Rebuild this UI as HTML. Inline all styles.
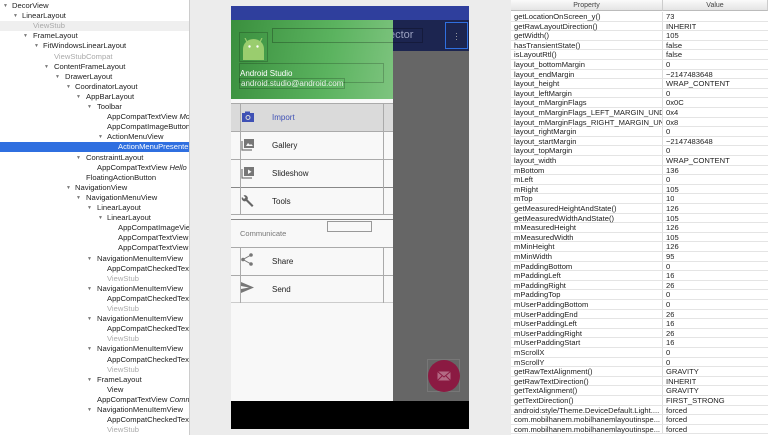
<!DOCTYPE html>
<html><head><meta charset="utf-8"><style>
*{margin:0;padding:0;box-sizing:border-box}
body{width:768px;height:435px;overflow:hidden;background:#ececec;font-family:"Liberation Sans",sans-serif;position:relative}
.tree{position:absolute;left:0;top:0;width:190px;height:435px;background:#fff;overflow:hidden;border-right:1px solid #ccc}
.tr{position:absolute;left:0;width:190px;height:10.1px;font-size:7.6px;line-height:10.1px;color:#222;white-space:nowrap}
.tr.g{color:#aaa}
.tr.sel{background:#2f6fe0;color:#fff}
.tr.stub{background:#efefef}
.ar{position:absolute;font-size:5px;color:#777}
.tbl{position:absolute;left:511px;top:0;width:257px;height:435px;background:#fff}
.th{position:absolute;top:0;height:11px;font-size:7px;line-height:11px;text-align:center;color:#444;background:linear-gradient(#fafafa,#e4e4e4);border-bottom:1px solid #bbb;border-right:1px solid #ccc}
.row{position:absolute;left:0;width:257px;height:9.6px;font-size:7.6px;line-height:9.6px;color:#222;border-bottom:1px solid #e4e4e4;white-space:nowrap}
.row span{position:absolute;overflow:hidden}
.p{left:3px;width:148px}.v{left:155px}
.row:after{content:"";position:absolute;left:151px;top:0;bottom:0;border-left:1px solid #ddd}
.ph{position:absolute;left:231px;top:6px;width:238px;height:423px;background:#666}
</style></head><body>
<div class="tree">
<div class="tr" style="top:1px"><span class="ar" style="left:3px">▼</span><span style="position:absolute;left:12px">DecorView</span></div>
<div class="tr" style="top:11.1px"><span class="ar" style="left:13px">▼</span><span style="position:absolute;left:22px">LinearLayout</span></div>
<div class="tr g stub" style="top:21.2px"><span style="position:absolute;left:33px">ViewStub</span></div>
<div class="tr" style="top:31.3px"><span class="ar" style="left:23px">▼</span><span style="position:absolute;left:33px">FrameLayout</span></div>
<div class="tr" style="top:41.4px"><span class="ar" style="left:34px">▼</span><span style="position:absolute;left:43px">FitWindowsLinearLayout</span></div>
<div class="tr g" style="top:51.5px"><span style="position:absolute;left:54px">ViewStubCompat</span></div>
<div class="tr" style="top:61.6px"><span class="ar" style="left:44px">▼</span><span style="position:absolute;left:54px">ContentFrameLayout</span></div>
<div class="tr" style="top:71.7px"><span class="ar" style="left:55px">▼</span><span style="position:absolute;left:65px">DrawerLayout</span></div>
<div class="tr" style="top:81.8px"><span class="ar" style="left:66px">▼</span><span style="position:absolute;left:75px">CoordinatorLayout</span></div>
<div class="tr" style="top:91.9px"><span class="ar" style="left:76px">▼</span><span style="position:absolute;left:86px">AppBarLayout</span></div>
<div class="tr" style="top:102px"><span class="ar" style="left:87px">▼</span><span style="position:absolute;left:97px">Toolbar</span></div>
<div class="tr" style="top:112.1px"><span style="position:absolute;left:107px">AppCompatTextView <i>Mo</i></span></div>
<div class="tr" style="top:122.2px"><span style="position:absolute;left:107px">AppCompatImageButton</span></div>
<div class="tr" style="top:132.3px"><span class="ar" style="left:98px">▼</span><span style="position:absolute;left:107px">ActionMenuView</span></div>
<div class="tr sel" style="top:142.4px"><span style="position:absolute;left:118px">ActionMenuPresenter</span></div>
<div class="tr" style="top:152.5px"><span class="ar" style="left:76px">▼</span><span style="position:absolute;left:86px">ConstraintLayout</span></div>
<div class="tr" style="top:162.6px"><span style="position:absolute;left:97px">AppCompatTextView <i>Hello</i></span></div>
<div class="tr" style="top:172.7px"><span style="position:absolute;left:86px">FloatingActionButton</span></div>
<div class="tr" style="top:182.8px"><span class="ar" style="left:66px">▼</span><span style="position:absolute;left:75px">NavigationView</span></div>
<div class="tr" style="top:192.9px"><span class="ar" style="left:76px">▼</span><span style="position:absolute;left:86px">NavigationMenuView</span></div>
<div class="tr" style="top:203px"><span class="ar" style="left:87px">▼</span><span style="position:absolute;left:97px">LinearLayout</span></div>
<div class="tr" style="top:213.1px"><span class="ar" style="left:98px">▼</span><span style="position:absolute;left:107px">LinearLayout</span></div>
<div class="tr" style="top:223.2px"><span style="position:absolute;left:118px">AppCompatImageView</span></div>
<div class="tr" style="top:233.3px"><span style="position:absolute;left:118px">AppCompatTextView</span></div>
<div class="tr" style="top:243.4px"><span style="position:absolute;left:118px">AppCompatTextView</span></div>
<div class="tr" style="top:253.5px"><span class="ar" style="left:87px">▼</span><span style="position:absolute;left:97px">NavigationMenuItemView</span></div>
<div class="tr" style="top:263.6px"><span style="position:absolute;left:107px">AppCompatCheckedTextView</span></div>
<div class="tr g" style="top:273.7px"><span style="position:absolute;left:107px">ViewStub</span></div>
<div class="tr" style="top:283.8px"><span class="ar" style="left:87px">▼</span><span style="position:absolute;left:97px">NavigationMenuItemView</span></div>
<div class="tr" style="top:293.9px"><span style="position:absolute;left:107px">AppCompatCheckedTextView</span></div>
<div class="tr g" style="top:304px"><span style="position:absolute;left:107px">ViewStub</span></div>
<div class="tr" style="top:314.1px"><span class="ar" style="left:87px">▼</span><span style="position:absolute;left:97px">NavigationMenuItemView</span></div>
<div class="tr" style="top:324.2px"><span style="position:absolute;left:107px">AppCompatCheckedTextView</span></div>
<div class="tr g" style="top:334.3px"><span style="position:absolute;left:107px">ViewStub</span></div>
<div class="tr" style="top:344.4px"><span class="ar" style="left:87px">▼</span><span style="position:absolute;left:97px">NavigationMenuItemView</span></div>
<div class="tr" style="top:354.5px"><span style="position:absolute;left:107px">AppCompatCheckedTextView</span></div>
<div class="tr g" style="top:364.6px"><span style="position:absolute;left:107px">ViewStub</span></div>
<div class="tr" style="top:374.7px"><span class="ar" style="left:87px">▼</span><span style="position:absolute;left:97px">FrameLayout</span></div>
<div class="tr" style="top:384.8px"><span style="position:absolute;left:107px">View</span></div>
<div class="tr" style="top:394.9px"><span style="position:absolute;left:97px">AppCompatTextView <i>Communicate</i></span></div>
<div class="tr" style="top:405px"><span class="ar" style="left:87px">▼</span><span style="position:absolute;left:97px">NavigationMenuItemView</span></div>
<div class="tr" style="top:415.1px"><span style="position:absolute;left:107px">AppCompatCheckedTextView</span></div>
<div class="tr g" style="top:425.2px"><span style="position:absolute;left:107px">ViewStub</span></div>
</div>

<div class="ph">
 <div style="position:absolute;left:0;top:0;width:238px;height:14px;background:#2f3f9d"></div>
 <div style="position:absolute;left:162px;top:14px;width:76px;height:31px;background:#1c2550;color:#9aa0c0;font-size:11px;line-height:31px"><span style="position:absolute;left:-4px">ector</span>
  <div style="position:absolute;left:52px;top:2px;width:23px;height:27px;border:1px solid #2f6fe0"></div>
  <div style="position:absolute;left:62px;top:12px;color:#aaa;font-size:9px;line-height:3px">·<br>·<br>·</div>
 </div>
 <div style="position:absolute;left:0;top:14px;width:162px;height:79px;background:linear-gradient(100deg,#3a8f3e,#5bb35f 60%,#7ec47f)"></div>
 <div style="position:absolute;left:8px;top:26px;width:29px;height:30px;border:1px solid rgba(0,0,0,.2)"></div>
 <svg style="position:absolute;left:11px;top:32px" width="23" height="22" viewBox="0 0 23 22"><path d="M1 11 A10.5 10 0 0 1 22 11 L22 22 L1 22Z" fill="#9acd6e"/><line x1="5" y1="4" x2="3" y2="0" stroke="#9acd6e" stroke-width="1.2"/><line x1="18" y1="4" x2="20" y2="0" stroke="#9acd6e" stroke-width="1.2"/><circle cx="7.5" cy="8.5" r="1.2" fill="#fff"/><circle cx="15.5" cy="8.5" r="1.2" fill="#fff"/></svg>
 <div style="position:absolute;left:41px;top:22px;width:151px;height:15px;border:1px solid rgba(0,0,0,.25)"></div>
 <div style="position:absolute;left:8px;top:57px;width:145px;height:20px;border:1px solid rgba(0,0,0,.2)"></div>
 <div style="position:absolute;left:9px;top:63px;color:#fff;font-size:8px">Android Studio</div>
 <div style="position:absolute;left:8px;top:72px;width:106px;height:11px;border:1px solid rgba(0,0,0,.2);color:#e8f3e8;font-size:8px;line-height:9px;padding-left:1px">android.studio@android.com</div>
 <div style="position:absolute;left:0;top:93px;width:162px;height:307px;background:#f8f8f8"></div>
 <div style="position:absolute;left:0;top:97px;width:162px;height:28px;background:#dadada;border-top:1px solid #aaa"></div>
 <div style="position:absolute;left:0;top:125px;width:162px;height:1px;background:#aaa"></div>
 <div style="position:absolute;left:0;top:153px;width:162px;height:1px;background:#aaa"></div>
 <div style="position:absolute;left:0;top:181px;width:162px;height:1px;background:#888"></div>
 <div style="position:absolute;left:0;top:208px;width:162px;height:1px;background:#aaa"></div>
 <div style="position:absolute;left:0;top:213px;width:162px;height:1px;background:#888"></div>
 <div style="position:absolute;left:0;top:241px;width:162px;height:1px;background:#aaa"></div>
 <div style="position:absolute;left:0;top:269px;width:162px;height:1px;background:#aaa"></div>
 <div style="position:absolute;left:0;top:296px;width:162px;height:1px;background:#ccc"></div>
 <div style="position:absolute;left:9px;top:97px;width:1px;height:112px;background:#aaa"></div>
 <div style="position:absolute;left:152px;top:97px;width:1px;height:112px;background:#aaa"></div>
 <div style="position:absolute;left:9px;top:241px;width:1px;height:56px;background:#aaa"></div>
 <div style="position:absolute;left:152px;top:241px;width:1px;height:56px;background:#aaa"></div>
 <div style="position:absolute;left:96px;top:215px;width:45px;height:11px;border:1px solid #999"></div>
 <svg style="position:absolute;left:10px;top:105px" width="14" height="12"><rect x="1" y="2" width="12" height="9" fill="#3f51b5"/><rect x="4" y="0.5" width="5" height="2" fill="#3f51b5"/><circle cx="7" cy="6.5" r="2" fill="none" stroke="#dadada" stroke-width="1"/></svg>
 <svg style="position:absolute;left:10px;top:133px" width="14" height="12"><rect x="3" y="0" width="10" height="9" fill="#777"/><path d="M1 2V11H11" stroke="#777" fill="none" stroke-width="1.2"/><path d="M5 7l2-3 2 2 1-1 2 2z" fill="#f8f8f8"/></svg>
 <svg style="position:absolute;left:10px;top:161px" width="14" height="12"><rect x="3" y="0" width="10" height="9" fill="#777"/><path d="M1 2V11H11" stroke="#777" fill="none" stroke-width="1.2"/><path d="M7 2.5v4.5l3.5-2.2z" fill="#f8f8f8"/></svg>
 <svg style="position:absolute;left:9px;top:188px" width="14" height="14"><path d="M2 3a3 3 0 0 0 4 4l6 6 1.5-1.5-6-6a3 3 0 0 0-4-4l2 2-1.5 1.5z" fill="#666"/></svg>
 <svg style="position:absolute;left:10px;top:247px" width="12" height="13"><circle cx="10" cy="2" r="1.8" fill="#777"/><circle cx="2" cy="6.5" r="1.8" fill="#777"/><circle cx="10" cy="11" r="1.8" fill="#777"/><path d="M10 2L2 6.5L10 11" stroke="#777" fill="none"/></svg>
 <svg style="position:absolute;left:10px;top:276px" width="13" height="11"><path d="M0 0L13 5.5L0 11L0 7L8 5.5L0 4z" fill="#777"/></svg>
 <div style="position:absolute;left:41px;top:107px;font-size:8px;color:#3f51b5">Import</div>
 <div style="position:absolute;left:41px;top:135px;font-size:8px;color:#222">Gallery</div>
 <div style="position:absolute;left:41px;top:163px;font-size:8px;color:#222">Slideshow</div>
 <div style="position:absolute;left:41px;top:191px;font-size:8px;color:#222">Tools</div>
 <div style="position:absolute;left:9px;top:223px;font-size:7.5px;color:#777">Communicate</div>
 <div style="position:absolute;left:41px;top:251px;font-size:8px;color:#222">Share</div>
 <div style="position:absolute;left:41px;top:279px;font-size:8px;color:#222">Send</div>
 <div style="position:absolute;left:196px;top:353px;width:33px;height:33px;border:1px solid #777"></div>
 <div style="position:absolute;left:197px;top:354px;width:32px;height:32px;border-radius:50%;background:#8b1a42"></div>
 <svg style="position:absolute;left:206px;top:365px" width="14" height="10"><rect x="0.5" y="0.5" width="13" height="9" fill="#b36a84"/><path d="M0.5 0.5L7 6L13.5 0.5M0.5 9.5L5 5M13.5 9.5L9 5" stroke="#8b1a42" fill="none"/></svg>
 <div style="position:absolute;left:0;top:395px;width:238px;height:28px;background:#000"></div>
</div>

<div class="tbl">
<div class="th" style="left:0;width:152px">Property</div>
<div class="th" style="left:152px;width:105px">Value</div>
<div id="rows"></div>
</div>
<script>
var d=[["getLocationOnScreen_y()","73"],["getRawLayoutDirection()","INHERIT"],["getWidth()","105"],["hasTransientState()","false"],["isLayoutRtl()","false"],["layout_bottomMargin","0"],["layout_endMargin","\u22122147483648"],["layout_height","WRAP_CONTENT"],["layout_leftMargin","0"],["layout_mMarginFlags","0x0C"],["layout_mMarginFlags_LEFT_MARGIN_UND...","0x4"],["layout_mMarginFlags_RIGHT_MARGIN_UN...","0x8"],["layout_rightMargin","0"],["layout_startMargin","\u22122147483648"],["layout_topMargin","0"],["layout_width","WRAP_CONTENT"],["mBottom","136"],["mLeft","0"],["mRight","105"],["mTop","10"],["getMeasuredHeightAndState()","126"],["getMeasuredWidthAndState()","105"],["mMeasuredHeight","126"],["mMeasuredWidth","105"],["mMinHeight","126"],["mMinWidth","95"],["mPaddingBottom","0"],["mPaddingLeft","16"],["mPaddingRight","26"],["mPaddingTop","0"],["mUserPaddingBottom","0"],["mUserPaddingEnd","26"],["mUserPaddingLeft","16"],["mUserPaddingRight","26"],["mUserPaddingStart","16"],["mScrollX","0"],["mScrollY","0"],["getRawTextAlignment()","GRAVITY"],["getRawTextDirection()","INHERIT"],["getTextAlignment()","GRAVITY"],["getTextDirection()","FIRST_STRONG"],["android:style/Theme.DeviceDefault.Light....","forced"],["com.mobilhanem.mobilhanemlayoutinspe...","forced"],["com.mobilhanem.mobilhanemlayoutinspe...","forced"]];
var h="";for(var i=0;i<d.length;i++){h+='<div class="row" style="top:'+(12+i*9.6)+'px"><span class="p">'+d[i][0]+'</span><span class="v">'+d[i][1]+'</span></div>';}
document.getElementById("rows").innerHTML=h;
</script>
</body></html>
